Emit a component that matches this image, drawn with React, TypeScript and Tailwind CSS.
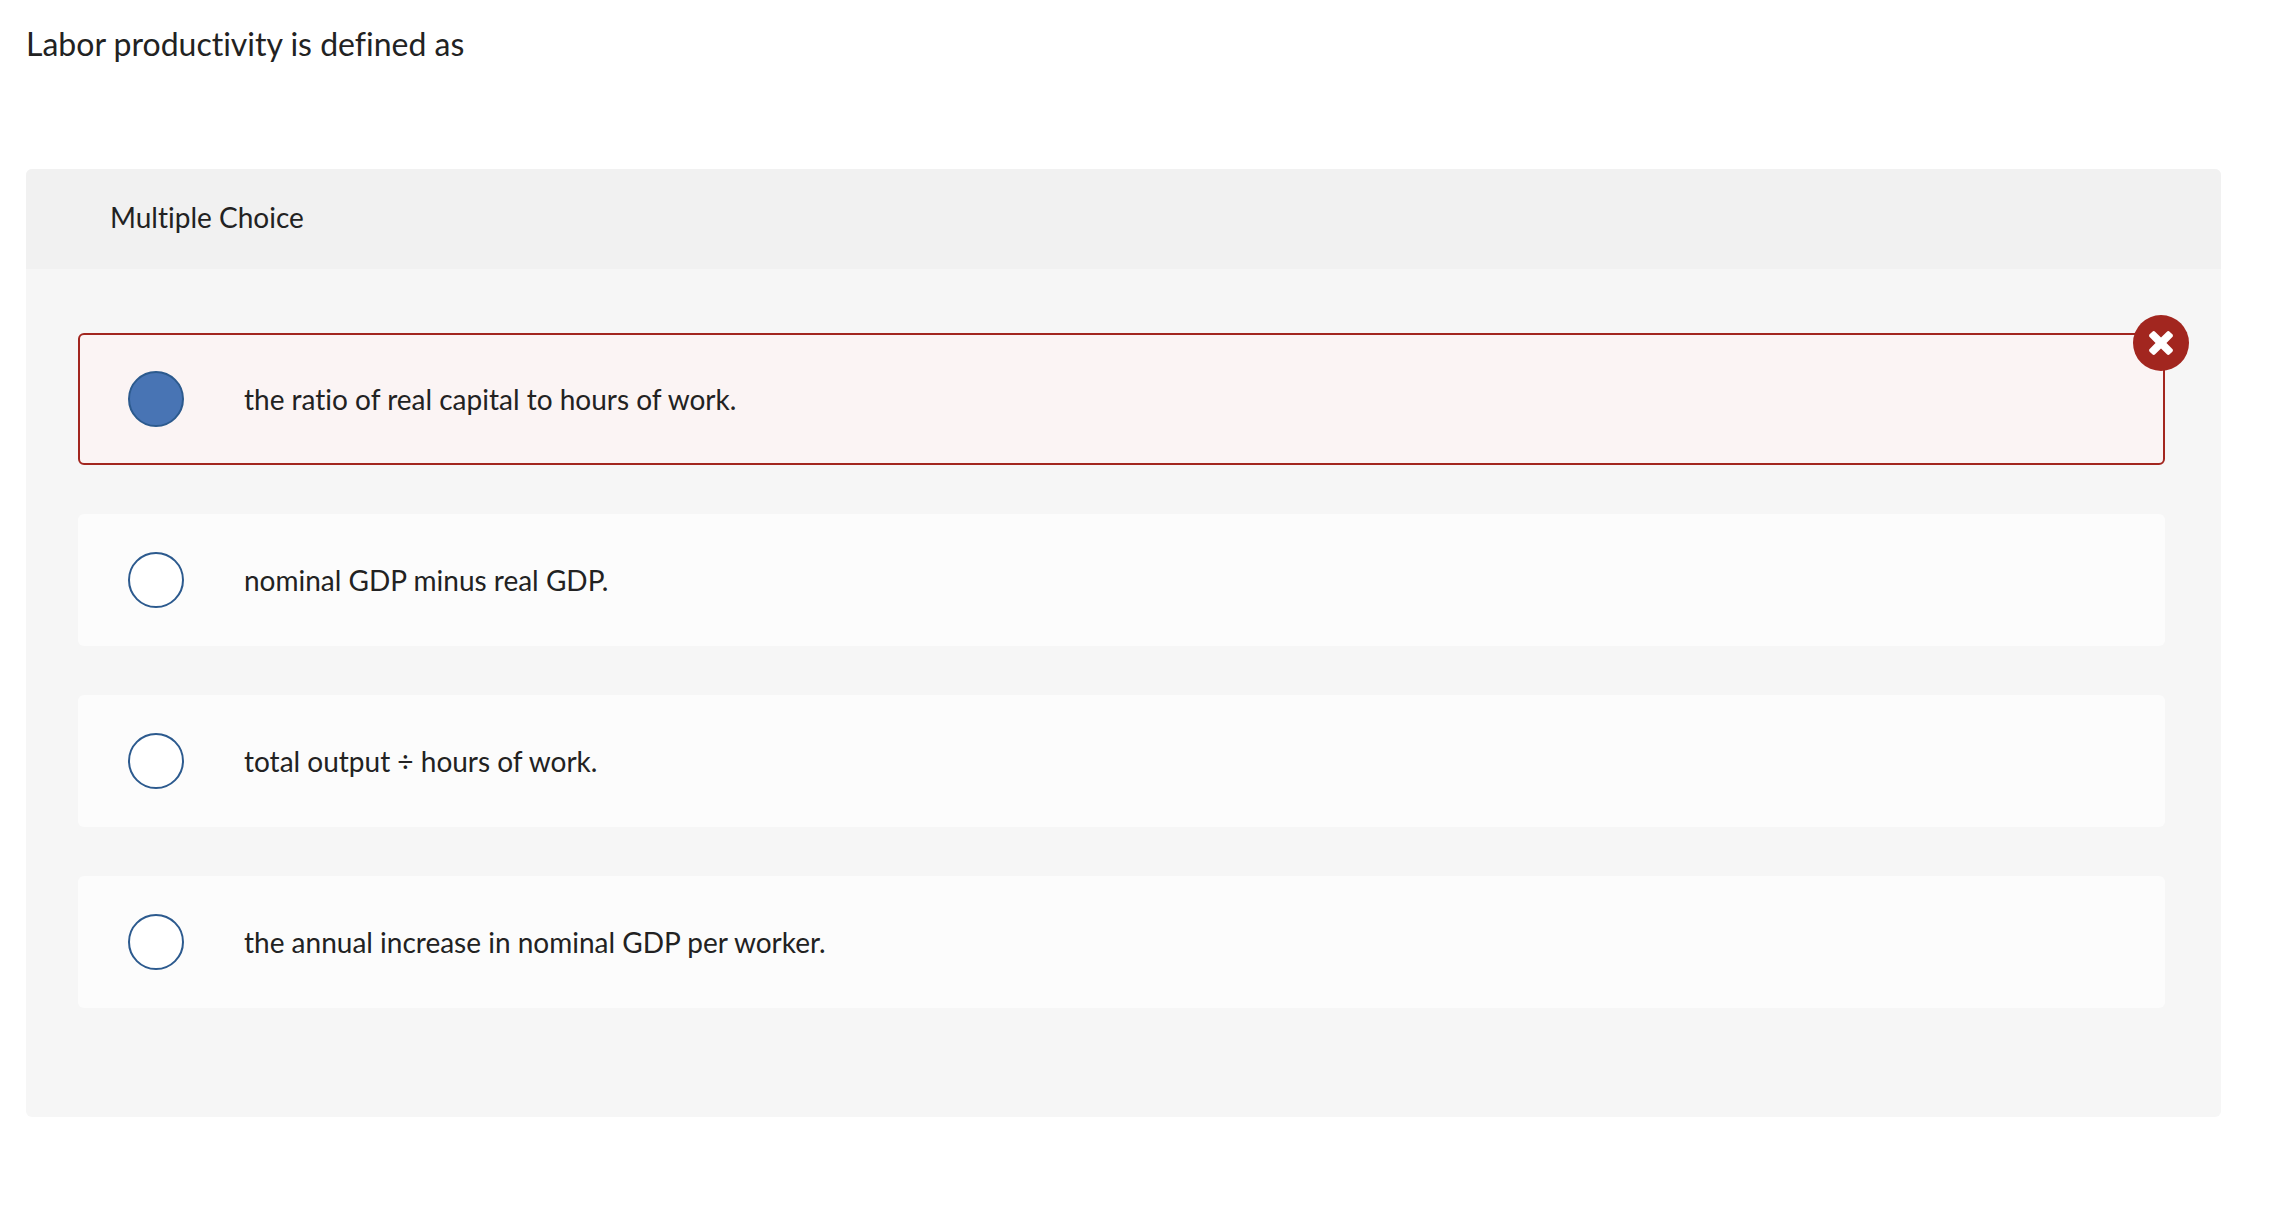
import { useState } from "react";

const choices = [
  "the ratio of real capital to hours of work.",
  "nominal GDP minus real GDP.",
  "total output ÷ hours of work.",
  "the annual increase in nominal GDP per worker.",
];

const WRONG_CHOICE = 0;

const WrongBadge = () => (
  <span className="absolute -top-5 -right-[26px] flex size-14 items-center justify-center rounded-full bg-[#a2261f]">
    <svg
      viewBox="0 64 1792 1792"
      className="size-9 fill-white"
      role="img"
      aria-label="Incorrect"
    >
      <path d="M1490 1322q0 40-28 68l-136 136q-28 28-68 28t-68-28l-294-294-294 294q-28 28-68 28t-68-28l-136-136q-28-28-28-68t28-68l294-294-294-294q-28-28-28-68t28-68l136-136q28-28 68-28t68 28l294 294 294-294q28-28 68-28t68 28l136 136q28 28 28 68t-28 68l-294 294 294 294q28 28 28 68z" />
    </svg>
  </span>
);

const App = () => {
  const [selected, setSelected] = useState(0);

  return (
    <main className="min-h-screen bg-white pt-6 pr-[52px] pb-28 pl-[26px] font-['Lato',sans-serif] text-[#222] [font-variant-ligatures:none]">
      <h1 className="mb-[105px] text-[32px] leading-10">
        Labor productivity is defined as
      </h1>

      <section className="rounded-md bg-[#f6f6f6]">
        <h2
          id="question-type"
          className="rounded-t-md bg-[#f1f1f1] px-[84px] pt-7 pb-8 text-[28px] leading-10"
        >
          Multiple Choice
        </h2>

        <div
          role="radiogroup"
          aria-labelledby="question-type"
          className="flex flex-col gap-[49px] pt-16 pr-14 pb-[109px] pl-[52px]"
        >
          {choices.map((choice, index) => {
            const isWrong = index === WRONG_CHOICE && selected === index;

            return (
              <label
                key={choice}
                className={`relative flex cursor-pointer items-center gap-[60px] rounded-md border-2 px-12 py-9 text-[28px] leading-10 ${
                  isWrong
                    ? "border-[#a2261f] bg-[#fbf4f4]"
                    : "border-transparent bg-[#fcfcfc]"
                }`}
              >
                <input
                  type="radio"
                  name="answer"
                  checked={selected === index}
                  onChange={() => setSelected(index)}
                  className="size-14 shrink-0 cursor-pointer appearance-none rounded-full border-2 border-[#2c5a8e] bg-white checked:bg-[#4874b4]"
                />
                <span>{choice}</span>
                {isWrong && <WrongBadge />}
              </label>
            );
          })}
        </div>
      </section>
    </main>
  );
};

export default App;
